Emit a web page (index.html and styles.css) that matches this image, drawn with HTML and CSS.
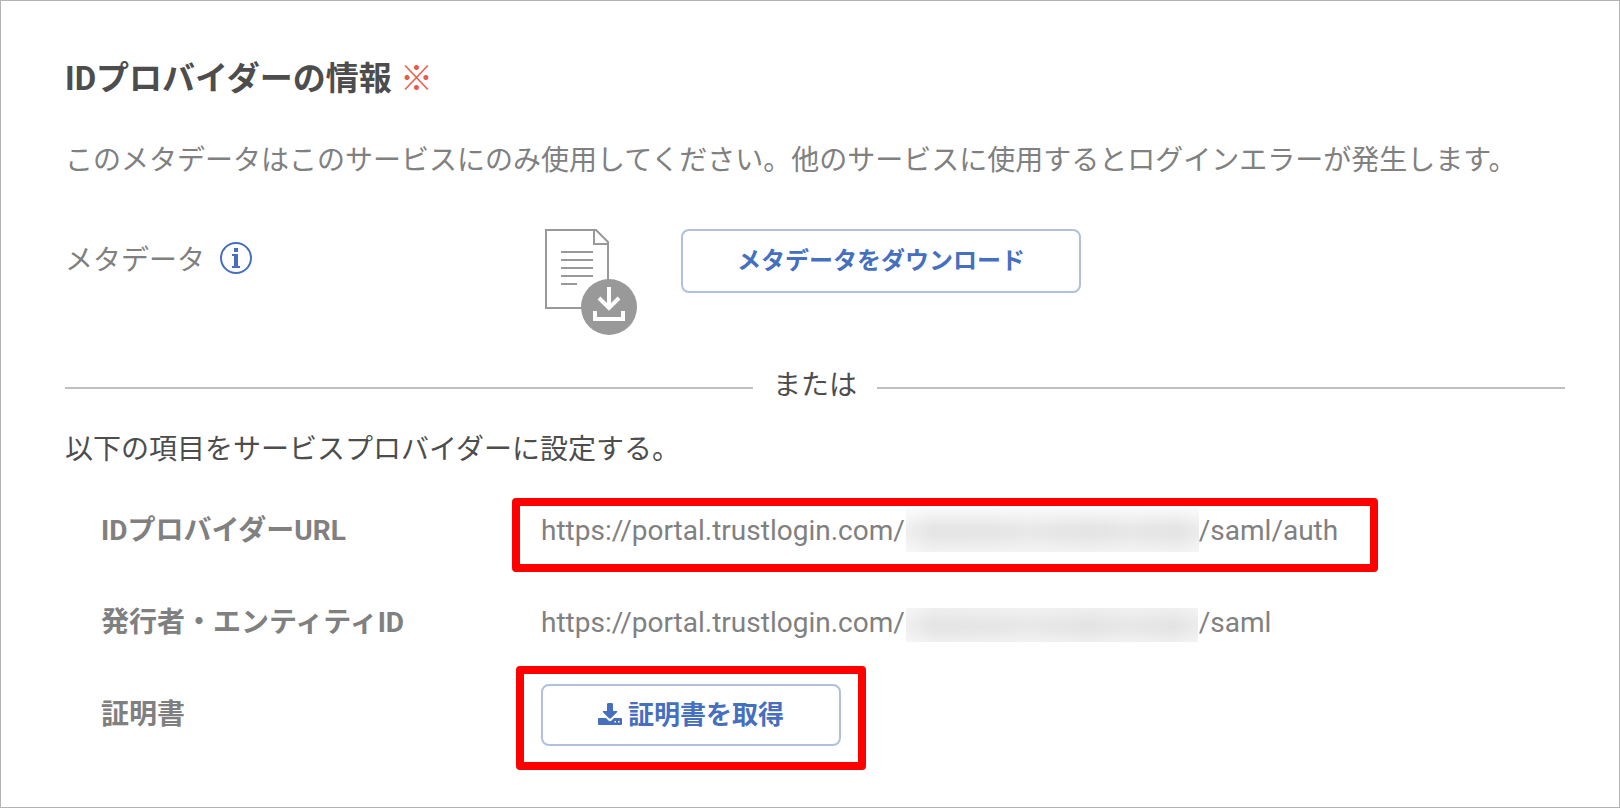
FILE: index.html
```html
<!DOCTYPE html>
<html lang="ja">
<head>
  <meta charset="UTF-8" />
  <meta name="viewport" content="width=device-width, initial-scale=1.0"/>
  <title>IDプロバイダーの情報</title>
  <link rel="stylesheet" href="styles.css">
</head>
<body>

<main class="panel">
  <h1 class="title">IDプロバイダーの情報 <span class="required">※</span></h1>
  <p class="note">このメタデータはこのサービスにのみ使用してください。他のサービスに使用するとログインエラーが発生します。</p>

  <!-- Metadata -->
  <div class="metadata">
    <div class="metadata-label">
      <span>メタデータ</span>
      <svg class="info-icon" viewBox="0 0 32 32">
        <circle cx="16" cy="16" r="15" fill="none" stroke="currentColor" stroke-width="2"/>
        <path d="M14 6h4v4h-4zM12 12h6v12h2v2h-8v-2h2V14h-2z" fill="currentColor"/>
      </svg>
    </div>
    <svg class="file-icon" viewBox="0 0 92 106">
      <path d="M1 1H51L63 13V79H1ZM49 1V15H63" fill="none" stroke="#999" stroke-width="2"/>
      <path d="M16 23H48M16 31H48M16 39H48M16 47H48M16 55H32" fill="none" stroke="#999" stroke-width="2"/>
      <circle cx="64" cy="78" r="28" fill="#999"/>
      <path d="M64 58V78M54 69L64 79L74 69M50 82V90H78V82" fill="none" stroke="#fff" stroke-width="4"/>
    </svg>
    <button class="btn btn-download" type="button">メタデータをダウンロード</button>
  </div>

  <div class="divider"><span>または</span></div>

  <!-- Manual settings -->
  <p class="lead">以下の項目をサービスプロバイダーに設定する。</p>
  <dl class="settings">
    <div class="row">
      <dt>IDプロバイダーURL</dt>
      <dd><span class="url highlight highlight-url">https://portal.trustlogin.com/<span class="masked masked-tall"></span>/saml/auth</span></dd>
    </div>
    <div class="row">
      <dt>発行者・エンティティID</dt>
      <dd><span class="url">https://portal.trustlogin.com/<span class="masked"></span>/saml</span></dd>
    </div>
    <div class="row">
      <dt>証明書</dt>
      <dd>
        <div class="highlight highlight-cert">
          <button class="btn btn-cert" type="button">
            <svg class="download-icon" viewBox="0 0 24 24">
              <path d="M9 1.500Q9 0 10 0H14Q15 0 15 1.500V8H18.500Q20 8 19 9.200L13 15.300Q12 16.200 11 15.300L5 9.200Q4 8 5.500 8H9Z" fill="currentColor"/>
              <path d="M1 15H8L10.500 17.500Q12 18.800 13.500 17.500L16 15H23Q24 15 24 16V21Q24 22 23 22H1Q0 22 0 21V16Q0 15 1 15Z" fill="currentColor"/>
              <path d="M16.500 18H18V19.500H16.500ZM20 18H21.500V19.500H20Z" fill="#fff"/>
            </svg>
            <span>証明書を取得</span>
          </button>
        </div>
      </dd>
    </div>
  </dl>
</main>

</body>
</html>
```
FILE: styles.css
```css
* { box-sizing: border-box; }

body {
  margin: 0;
  font-family: Roboto, "Noto Sans CJK JP", sans-serif;
  font-size: 28px;
  line-height: 40px;
  color: #4d4d4d;
  background: #fff;
}

h1, p, dl, dd { margin: 0; }

.panel {
  min-height: 100vh;
  padding: 54px 54px 40px 64px;
  border: 1px solid #b3b3b3;
}

.title {
  font-size: 33px;
  line-height: 48px;
  font-weight: bold;
}

.required {
  color: #ea5949;
  font-weight: normal;
}

.note {
  margin-top: 38px;
  color: #808080;
}

/* Metadata */
.metadata {
  display: flex;
  align-items: flex-start;
  margin-top: 48px;
}

.metadata-label {
  display: flex;
  align-items: center;
  gap: 15px;
  width: 480px;
  height: 58px;
  color: #808080;
}

.metadata-label span { padding-top: 5px; }

.info-icon {
  width: 32px;
  height: 32px;
  color: #466fc0;
}

.file-icon {
  width: 92px;
  height: 106px;
  margin-right: 44px;
}

.btn {
  display: flex;
  align-items: center;
  justify-content: center;
  border: 2px solid #b1c0de;
  border-radius: 8px;
  background: #fff;
  color: #466fc0;
  font-family: inherit;
  font-weight: bold;
  line-height: 40px;
  cursor: pointer;
}

.btn-download {
  width: 400px;
  height: 64px;
  font-size: 24px;
}

.btn-cert {
  gap: 6px;
  width: 300px;
  height: 62px;
  font-size: 26px;
}

.download-icon {
  width: 24px;
  height: 24px;
}

.divider {
  display: flex;
  align-items: center;
  gap: 20px;
  margin-top: 31px;
}

.divider::before,
.divider::after {
  content: "";
  flex: 1;
  height: 2px;
  margin-top: 4px;
  background: #c0c0c0;
}

/* Settings list */
.lead { margin-top: 24px; }

.settings {
  margin-top: 15px;
  padding-left: 36px;
}

.row {
  display: flex;
  align-items: center;
  min-height: 92px;
  color: #808080;
}

.row dt {
  width: 440px;
  font-weight: bold;
}

.url {
  display: flex;
  align-items: center;
}

.masked {
  width: 292px;
  height: 34px;
  margin: 4px 1px 0;
  background:
    linear-gradient(to bottom, rgba(255,255,255,0.4), transparent 45%, transparent 60%, rgba(255,255,255,0.4)),
    linear-gradient(to right, #f0f0f0, #e5e5e5 9%, #e6e6e6 30%, #e9e9e9 42%, #e4e4e4 63%, #e8e8e8 76%, #e4e4e4 92%, #ececec);
}

.masked-tall {
  width: 293px;
  height: 44px;
  margin: 0 0 2px 1px;
  background:
    linear-gradient(to bottom, rgba(255,255,255,0.8), transparent 45%, transparent 60%, rgba(255,255,255,0.5)),
    linear-gradient(to right, #f0f0f0, #e5e5e5 9%, #e6e6e6 30%, #e9e9e9 42%, #e4e4e4 63%, #e8e8e8 76%, #e4e4e4 92%, #ececec);
}

/* Red frames around the values to copy */
.highlight {
  position: relative;
  width: fit-content;
}

.highlight::after {
  content: "";
  position: absolute;
  border: 8px solid #f00;
  border-radius: 4px;
  pointer-events: none;
}

.highlight-url::after { inset: -10px -40px -18px -29px; }
.highlight-cert::after { inset: -18px -25px -24px -25px; }
```
